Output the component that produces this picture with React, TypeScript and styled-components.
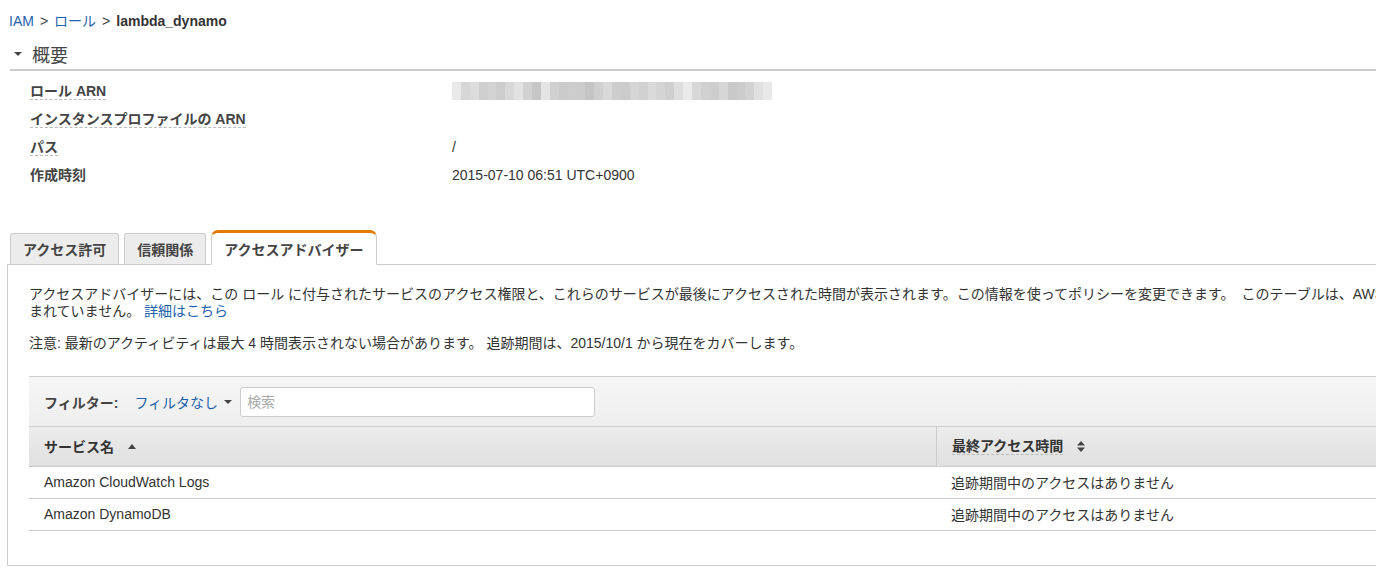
import styled, { createGlobalStyle } from "styled-components";

const GlobalStyle = createGlobalStyle`
    html, body {
        margin: 0;
        padding: 0;
        background: #fff;
        overflow: hidden;
    }
    body {
        font-family: "Liberation Sans", "Noto Sans CJK JP", sans-serif;
        font-size: 14px;
        color: #444;
    }
`;

const Page = styled.div`
    width: 1520px;
`;

const Breadcrumb = styled.div`
    display: flex;
    align-items: center;
    gap: 6px;
    padding: 12px 0 0 9px;
    height: 18px;
    line-height: 18px;
`;

const Link = styled.a`
    color: #1e62ac;
    text-decoration: none;
    cursor: pointer;
`;

const Current = styled.span`
    font-weight: bold;
    color: #333;
`;

const SectionHeader = styled.div`
    display: flex;
    align-items: center;
    gap: 10px;
    margin: 12px 0 0 10px;
    padding: 0 0 3px 4px;
    border-bottom: 2px solid #ccc;
    height: 24px;
    font-size: 18px;
    color: #444;
`;

const Caret = styled.span`
    width: 0;
    height: 0;
    border-left: 4px solid transparent;
    border-right: 4px solid transparent;
    border-top: 4px solid #444;
    display: inline-block;
`;

const Summary = styled.div`
    display: grid;
    grid-template-columns: 422px 1fr;
    grid-auto-rows: 28px;
    align-items: center;
    margin: 6px 0 0 30px;
`;

const Label = styled.span<{ $hint?: boolean }>`
    justify-self: start;
    font-weight: bold;
    color: #444;
    line-height: 16px;
    border-bottom: ${(p) => (p.$hint ? "1px dashed #bbb" : "1px solid transparent")};
`;

const Value = styled.span`
    color: #333;
`;

const Blur = styled.div`
    display: flex;
    height: 18px;
    width: 320px;
`;

const BlurCell = styled.span`
    flex: 1;
    height: 100%;
`;

const Tabs = styled.div`
    display: flex;
    align-items: flex-end;
    gap: 5px;
    margin: 41px 0 0 10px;
    position: relative;
    z-index: 1;
`;

const Tab = styled.div<{ $active?: boolean }>`
    display: flex;
    align-items: center;
    padding: 0 12px;
    font-weight: bold;
    color: #444;
    border: 1px solid #ccc;
    border-bottom: ${(p) => (p.$active ? "1px solid #fff" : "none")};
    border-top: ${(p) => (p.$active ? "3px solid #e07a00" : "1px solid #ccc")};
    border-radius: ${(p) => (p.$active ? "7px 7px 0 0" : "3px 3px 0 0")};
    background: ${(p) => (p.$active ? "#fff" : "#ececec")};
    height: ${(p) => (p.$active ? "31px" : "30px")};
    margin-bottom: ${(p) => (p.$active ? "-1px" : "0")};
`;

const Panel = styled.div`
    margin-left: 7px;
    border: 1px solid #ccc;
    padding: 21px 0 34px 21px;
`;

const Paragraph = styled.p`
    margin: 0;
    line-height: 17px;
    white-space: nowrap;
    color: #333;
`;

const Note = styled(Paragraph)`
    margin-top: 15px;
`;

const Table = styled.div`
    margin-top: 24px;
    border-top: 1px solid #ccc;
`;

const FilterBar = styled.div`
    display: flex;
    align-items: center;
    height: 49px;
    padding-left: 15px;
    background: linear-gradient(#f6f6f6, #eeeeee);
`;

const FilterLabel = styled.span`
    font-weight: bold;
    color: #444;
    margin-right: 16px;
`;

const FilterSelect = styled.span`
    display: flex;
    align-items: center;
    gap: 6px;
    color: #1e62ac;
    margin-right: 8px;
`;

const Search = styled.input`
    width: 355px;
    height: 30px;
    box-sizing: border-box;
    border: 1px solid #ccc;
    border-radius: 3px;
    padding: 0 6px;
    font: inherit;
    background: #fff;
    outline: none;
    &::placeholder {
        color: #aaa;
    }
`;

const Row = styled.div<{ $head?: boolean }>`
    display: grid;
    grid-template-columns: 907px 1fr;
    height: ${(p) => (p.$head ? "39px" : "31px")};
    border-top: 1px solid #ccc;
    background: ${(p) => (p.$head ? "linear-gradient(#ececec, #e0e0e0)" : "#fff")};
    font-weight: ${(p) => (p.$head ? "bold" : "normal")};
    &:last-child {
        border-bottom: 1px solid #ccc;
    }
`;

const Cell = styled.div<{ $divider?: boolean }>`
    display: flex;
    align-items: center;
    gap: 14px;
    padding: 0 0 1px 15px;
    border-left: ${(p) => (p.$divider ? "1px solid #ccc" : "none")};
    color: #333;
`;

const HintText = styled.span`
    line-height: 16px;
    border-bottom: 1px dashed #bbb;
`;

const SortUp = () => (
    <svg width="8" height="5" viewBox="0 0 8 5">
        <path d="M0 5 L4 0 L8 5 Z" fill="#444" />
    </svg>
);

const SortBoth = () => (
    <svg width="8" height="11" viewBox="0 0 8 11">
        <path d="M0 4.5 L4 0 L8 4.5 Z M0 6.5 L4 11 L8 6.5 Z" fill="#444" />
    </svg>
);

const blurShades = [
    "#e9e9e9", "#d6d6d6", "#dcdcdc", "#cfcfcf", "#d3d3d3", "#cdcdcd", "#d8d8d8", "#e2e2e2",
    "#d1d1d1", "#c6c6c6", "#e4e4e4", "#d0d0d0", "#cbcbcb", "#cdcdcd", "#cccccc", "#c5c5c5",
    "#cfcfcf", "#d9d9d9", "#cdcdcd", "#cbcbcb", "#d5d5d5", "#d1d1d1", "#dadada", "#d4d4d4",
    "#cfcfcf", "#dedede", "#eaeaea", "#d7d7d7", "#d0d0d0", "#cdcdcd", "#d6d6d6", "#c9c9c9",
    "#cccccc", "#d2d2d2", "#e0e0e0", "#e8e8e8",
];

const rows = [
    { name: "Amazon CloudWatch Logs", last: "追跡期間中のアクセスはありません" },
    { name: "Amazon DynamoDB", last: "追跡期間中のアクセスはありません" },
];

export default function App() {
    return (
        <Page>
            <GlobalStyle />
            <Breadcrumb>
                <Link>IAM</Link>
                <span>&gt;</span>
                <Link>ロール</Link>
                <span>&gt;</span>
                <Current>lambda_dynamo</Current>
            </Breadcrumb>

            <SectionHeader>
                <Caret />
                <span>概要</span>
            </SectionHeader>

            <Summary>
                <Label $hint>ロール ARN</Label>
                <Blur>
                    {blurShades.map((c, i) => (
                        <BlurCell key={i} style={{ background: c }} />
                    ))}
                </Blur>
                <Label $hint>インスタンスプロファイルの ARN</Label>
                <Value />
                <Label $hint>パス</Label>
                <Value>/</Value>
                <Label>作成時刻</Label>
                <Value>2015-07-10 06:51 UTC+0900</Value>
            </Summary>

            <Tabs>
                <Tab>アクセス許可</Tab>
                <Tab>信頼関係</Tab>
                <Tab $active>アクセスアドバイザー</Tab>
            </Tabs>

            <Panel>
                <Paragraph>
                    アクセスアドバイザーには、この ロール に付与されたサービスのアクセス権限と、これらのサービスが最後にアクセスされた時間が表示されます。この情報を使ってポリシーを変更できます。　このテーブルは、AWS のすべてのサービスを含
                    <br />
                    まれていません。 <Link>詳細はこちら</Link>
                </Paragraph>
                <Note>
                    注意: 最新のアクティビティは最大 4 時間表示されない場合があります。 追跡期間は、2015/10/1 から現在をカバーします。
                </Note>

                <Table>
                    <FilterBar>
                        <FilterLabel>フィルター:</FilterLabel>
                        <FilterSelect>
                            フィルタなし
                            <Caret />
                        </FilterSelect>
                        <Search placeholder="検索" />
                    </FilterBar>
                    <Row $head>
                        <Cell>
                            サービス名
                            <SortUp />
                        </Cell>
                        <Cell $divider>
                            <HintText>最終アクセス時間</HintText>
                            <SortBoth />
                        </Cell>
                    </Row>
                    {rows.map((r) => (
                        <Row key={r.name}>
                            <Cell>{r.name}</Cell>
                            <Cell>{r.last}</Cell>
                        </Row>
                    ))}
                </Table>
            </Panel>
        </Page>
    );
}
